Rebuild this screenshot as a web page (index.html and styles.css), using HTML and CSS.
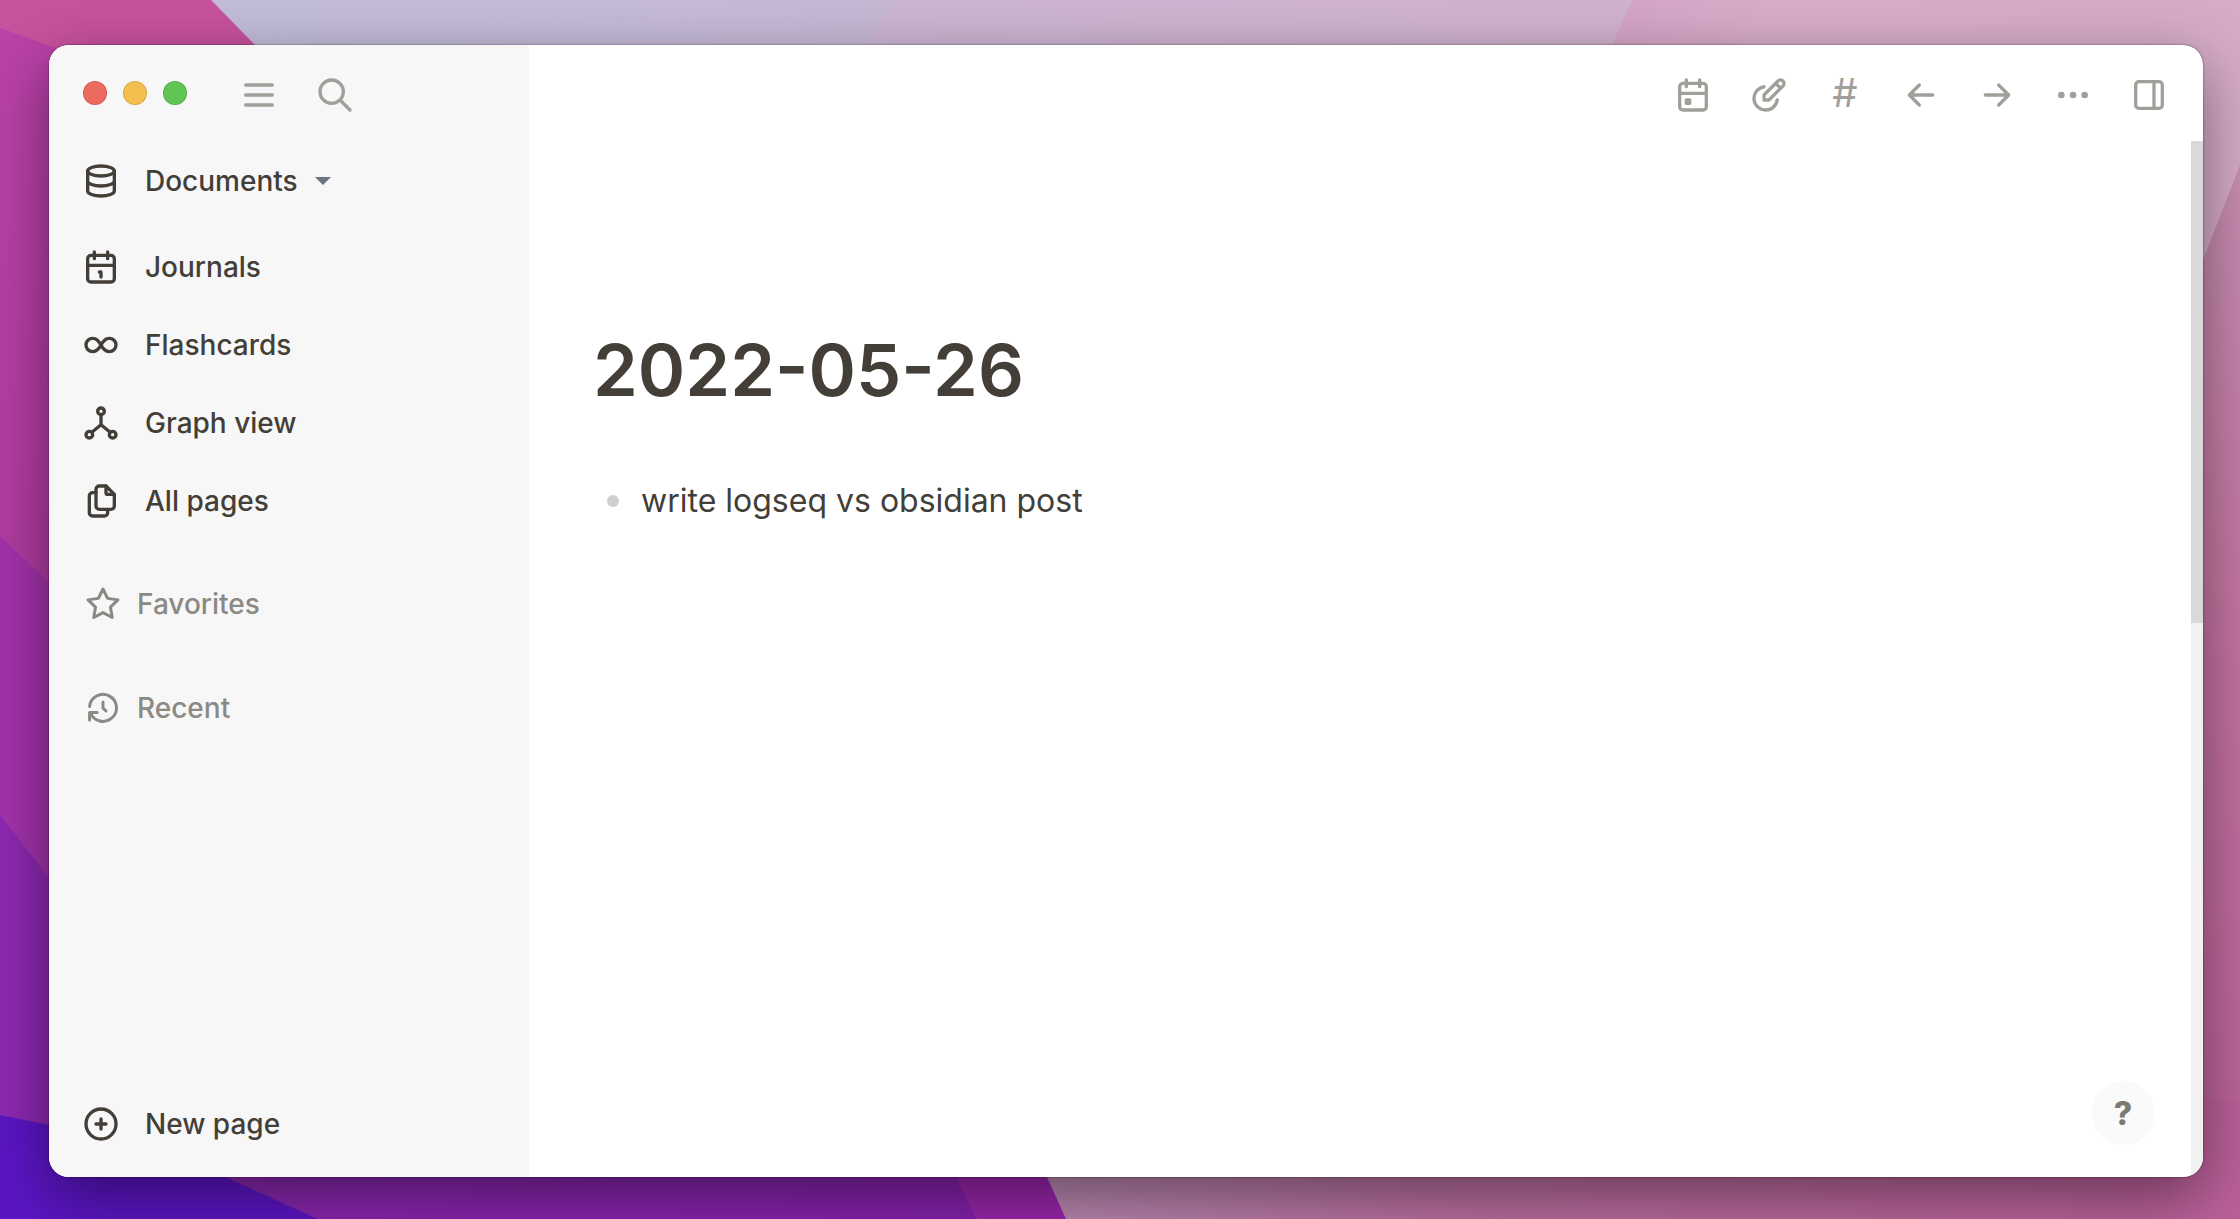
FILE: index.html
```html
<!DOCTYPE html>
<html lang="en">
<head>
    <meta charset="UTF-8">
    <meta name="viewport" content="width=device-width, initial-scale=1.0">
    <title>2022-05-26</title>
    <link rel="stylesheet" href="styles.css">
</head>
<body>
    <svg class="wallpaper" viewBox="0 0 2240 1219" preserveAspectRatio="none" aria-hidden="true">
        <defs>
            <linearGradient id="sky" x1="0" x2="1" y1="0" y2="0">
                <stop offset="0" stop-color="#c1bedb"/>
                <stop offset="0.35" stop-color="#c6b9d6"/>
                <stop offset="0.7" stop-color="#d2b0cb"/>
            </linearGradient>
            <linearGradient id="rose" x1="0" x2="1" y1="0" y2="0">
                <stop offset="0" stop-color="#d19bc4"/>
                <stop offset="0.4" stop-color="#d8adc9"/>
                <stop offset="1" stop-color="#d6abc7"/>
            </linearGradient>
            <linearGradient id="dusk" x1="0" x2="0" y1="0" y2="1">
                <stop offset="0" stop-color="#c88fb2"/>
                <stop offset="0.45" stop-color="#c473a0"/>
                <stop offset="1" stop-color="#bb6099"/>
            </linearGradient>
            <linearGradient id="ground" x1="0" x2="1" y1="0" y2="0">
                <stop offset="0" stop-color="#b98bb2"/>
                <stop offset="0.35" stop-color="#ba6f9f"/>
                <stop offset="1" stop-color="#bb6099"/>
            </linearGradient>
            <linearGradient id="magenta" x1="0" x2="0" y1="0" y2="1">
                <stop offset="0" stop-color="#ba42a8"/>
                <stop offset="1" stop-color="#ad3a9f"/>
            </linearGradient>
            <linearGradient id="violet" x1="0" x2="1" y1="0" y2="0">
                <stop offset="0" stop-color="#8c29b0"/>
                <stop offset="1" stop-color="#8421ab"/>
            </linearGradient>
        </defs>
        <rect width="2240" height="1219" fill="url(#sky)"/>
        <path d="M895 0H1700V200H770Z" fill="#d0b4cf" opacity="0.5"/>
        <path d="M1632 0H2240V400H1455Z" fill="url(#rose)"/>
        <path d="M2240 165L2203 260L2000 600V1219H2240Z" fill="url(#dusk)"/>
        <path d="M1000 1100H2240V1219H1000Z" fill="url(#ground)"/>
        <path d="M0 0H211L400 193V600H0Z" fill="#c7529d"/>
        <path d="M0 28L50 46L400 150V700H0Z" fill="url(#magenta)"/>
        <path d="M0 536L49 583L400 760V1000H0Z" fill="#a233aa"/>
        <path d="M0 815L49 878L400 1050H900L977 1219H0Z" fill="url(#violet)"/>
        <path d="M915 1100H1012L1066 1219H977Z" fill="#9925ac"/>
        <path d="M0 1115L49 1125L225 1177L318 1219H0Z" fill="#5b15c4"/>
    </svg>

    <div class="window">
        <aside class="sidebar">
            <header class="topbar">
                <div class="lights">
                    <button class="light close" aria-label="Close"></button>
                    <button class="light minimize" aria-label="Minimize"></button>
                    <button class="light zoom" aria-label="Zoom"></button>
                </div>
                <div class="tools">
                    <button class="tool" aria-label="Menu">
                        <svg class="icon" viewBox="0 0 24 24"><path d="M4 6h16M4 12h16M4 18h16"/></svg>
                    </button>
                    <button class="tool" aria-label="Search">
                        <svg class="icon" viewBox="0 0 24 24"><circle cx="10" cy="10" r="7"/><path d="M21 21l-6-6"/></svg>
                    </button>
                </div>
            </header>

            <button class="item graph">
                <svg class="icon" viewBox="0 0 24 24"><ellipse cx="12" cy="6" rx="8" ry="3"/><path d="M4 6v6c0 1.657 3.582 3 8 3s8-1.343 8-3V6M4 12v6c0 1.657 3.582 3 8 3s8-1.343 8-3v-6"/></svg>
                Documents
                <span class="caret"></span>
            </button>

            <nav class="nav">
                <a class="item" href="#">
                    <svg class="icon" viewBox="0 0 24 24"><rect x="4" y="5" width="16" height="16" rx="2"/><path d="M16 3v4M8 3v4M4 11h16M11 15h1v3"/></svg>
                    Journals
                </a>
                <a class="item" href="#">
                    <svg class="icon" viewBox="0 0 24 24"><path d="M9.828 9.172a4 4 0 1 0 0 5.656a10 10 0 0 0 2.172-2.828a10 10 0 0 1 2.172-2.828a4 4 0 1 1 0 5.656a10 10 0 0 1-2.172-2.828a10 10 0 0 0-2.172-2.828"/></svg>
                    Flashcards
                </a>
                <a class="item" href="#">
                    <svg class="icon" viewBox="0 0 24 24"><circle cx="12" cy="5" r="2"/><circle cx="5" cy="19" r="2"/><circle cx="19" cy="19" r="2"/><path d="M6.5 17.500l5.500-4.500l5.500 4.500M12 7v6"/></svg>
                    Graph view
                </a>
                <a class="item" href="#">
                    <svg class="icon" viewBox="0 0 24 24"><path d="M15 3v4a1 1 0 0 0 1 1h4"/><path d="M18 17h-7a2 2 0 0 1-2-2V5a2 2 0 0 1 2-2h4l5 5v7a2 2 0 0 1-2 2z"/><path d="M16 17v2a2 2 0 0 1-2 2H7a2 2 0 0 1-2-2V9a2 2 0 0 1 2-2h2"/></svg>
                    All pages
                </a>
            </nav>

            <div class="groups">
                <button class="group">
                    <svg class="icon small" viewBox="0 0 24 24"><path d="M12 17.750l-6.172 3.245l1.179-6.873l-5-4.867l6.900-1l3.086-6.253l3.086 6.253l6.900 1l-5 4.867l1.179 6.873z"/></svg>
                    Favorites
                </button>
                <button class="group">
                    <svg class="icon small" viewBox="0 0 24 24"><path d="M12 8v4l2 2M3.050 11a9 9 0 1 1 .5 4m-.5 5v-5h5"/></svg>
                    Recent
                </button>
            </div>

            <button class="item new-page">
                <svg class="icon" viewBox="0 0 24 24"><circle cx="12" cy="12" r="9"/><path d="M9 12h6M12 9v6"/></svg>
                New page
            </button>
        </aside>

        <main class="main">
            <header class="topbar right">
                <div class="tools">
                    <button class="tool" aria-label="Today">
                        <svg class="icon" viewBox="0 0 24 24"><rect x="4" y="5" width="16" height="16" rx="2"/><path d="M16 3v4M8 3v4M4 11h16M8 15h2v2H8z"/></svg>
                    </button>
                    <button class="tool" aria-label="Edit">
                        <svg class="icon" viewBox="0 0 24 24"><path d="M12 15l8.385-8.415a2.100 2.100 0 0 0-2.970-2.970L9 12v3h3zM16 5l3 3M9 7.070a7 7 0 0 0 1 13.930a7 7 0 0 0 6.929-6"/></svg>
                    </button>
                    <button class="tool hash" aria-label="Tags">#</button>
                    <button class="tool" aria-label="Back">
                        <svg class="icon" viewBox="0 0 24 24"><path d="M5 12h14M5 12l6 6M5 12l6-6"/></svg>
                    </button>
                    <button class="tool" aria-label="Forward">
                        <svg class="icon" viewBox="0 0 24 24"><path d="M5 12h14M13 18l6-6M13 6l6 6"/></svg>
                    </button>
                    <button class="tool" aria-label="More">
                        <svg class="icon" viewBox="0 0 24 24"><circle cx="5" cy="12" r="1"/><circle cx="12" cy="12" r="1"/><circle cx="19" cy="12" r="1"/></svg>
                    </button>
                    <button class="tool" aria-label="Toggle right sidebar">
                        <svg class="icon" viewBox="0 0 24 24"><rect x="4" y="4" width="16" height="16" rx="2"/><path d="M15 4v16"/></svg>
                    </button>
                </div>
            </header>

            <div class="scroll">
                <article class="page">
                    <h1>2022-05-26</h1>
                    <ul class="blocks">
                        <li>write logseq vs obsidian post</li>
                    </ul>
                </article>
                <div class="track"><div class="thumb"></div></div>
                <button class="help" aria-label="Help">?</button>
            </div>
        </main>
    </div>
</body>
</html>
```
FILE: styles.css
```css
* {
    box-sizing: border-box;
}

body {
    margin: 0;
    padding: 45px 37px 42px 49px;
    height: 100vh;
    display: flex;
    overflow: hidden;
    font-family: Inter, "Liberation Sans", sans-serif;
    color: #433f38;
}

button {
    border: none;
    padding: 0;
    background: none;
    font: inherit;
    color: inherit;
    cursor: pointer;
}

.wallpaper {
    position: absolute;
    top: 0;
    left: 0;
    width: 100%;
    height: 100%;
}

.window {
    position: relative;
    flex: 1;
    display: grid;
    grid-template-columns: 480px 1fr;
    border-radius: 20px;
    overflow: hidden;
    background-color: #fff;
    box-shadow: 0 0 2px rgba(0, 0, 0, 0.6), 0 20px 60px rgba(0, 0, 0, 0.45);
}

.icon {
    display: block;
    width: 40px;
    height: 40px;
    fill: none;
    stroke: currentColor;
    stroke-width: 2;
    stroke-linecap: round;
    stroke-linejoin: round;
}

.icon.small {
    width: 36px;
    height: 36px;
}

/* top bars */
.topbar {
    display: flex;
    align-items: center;
    height: 96px;
}

.topbar.right {
    justify-content: flex-end;
    padding-right: 34px;
}

.lights {
    display: flex;
    gap: 16px;
    margin: 0 52px 0 2px;
}

.light {
    width: 24px;
    height: 24px;
    border-radius: 50%;
    border: 1px solid rgba(0, 0, 0, 0.12);
}

.close {
    background-color: #ed6a5e;
}

.minimize {
    background-color: #f5bf4f;
}

.zoom {
    background-color: #61c554;
}

.tools {
    display: flex;
    gap: 36px;
    padding-top: 4px;
    color: #a19f9a;
}

.tool {
    width: 40px;
    height: 40px;
}

.hash {
    padding-bottom: 4px;
    font-size: 40px;
    line-height: 36px;
}

/* left sidebar */
.sidebar {
    display: flex;
    flex-direction: column;
    padding: 0 32px 14px;
    background-color: #f7f7f7;
    font-size: 28px;
    font-weight: 500;
}

.item {
    display: flex;
    align-items: center;
    gap: 24px;
    height: 78px;
    color: inherit;
    text-decoration: none;
}

.graph {
    height: 80px;
    margin-bottom: 7px;
}

.caret {
    border: 8px solid transparent;
    border-top-color: #6b7280;
    border-bottom: none;
    margin-left: -7px;
}

.groups {
    margin-top: 12px;
}

.group {
    display: flex;
    align-items: center;
    gap: 16px;
    height: 104px;
    padding-left: 4px;
    color: #8b8984;
}

.new-page {
    margin-top: auto;
}

/* page */
.main {
    display: flex;
    flex-direction: column;
}

.scroll {
    position: relative;
    flex: 1;
    display: flex;
}

.page {
    flex: 1;
    padding: 189px 64px 0;
}

h1 {
    margin: 0 0 67px;
    font-size: 72px;
    line-height: 80px;
    font-weight: 600;
}

.blocks {
    margin: 0;
    padding: 0 0 0 14px;
    list-style: none;
    font-size: 32px;
    line-height: 48px;
}

.blocks li {
    display: flex;
    align-items: center;
    gap: 22px;
}

.blocks li::before {
    content: "";
    width: 12px;
    height: 12px;
    border-radius: 50%;
    background-color: #cfcfcd;
}

.track {
    width: 12px;
    background-color: #f1f1f1;
}

.thumb {
    height: 46.5%;
    background-color: #d9d9d9;
}

.help {
    position: absolute;
    right: 48px;
    bottom: 32px;
    width: 64px;
    height: 64px;
    border-radius: 50%;
    background-color: #fafafa;
    color: #7d7a73;
    font-size: 32px;
    font-weight: 800;
}
```
